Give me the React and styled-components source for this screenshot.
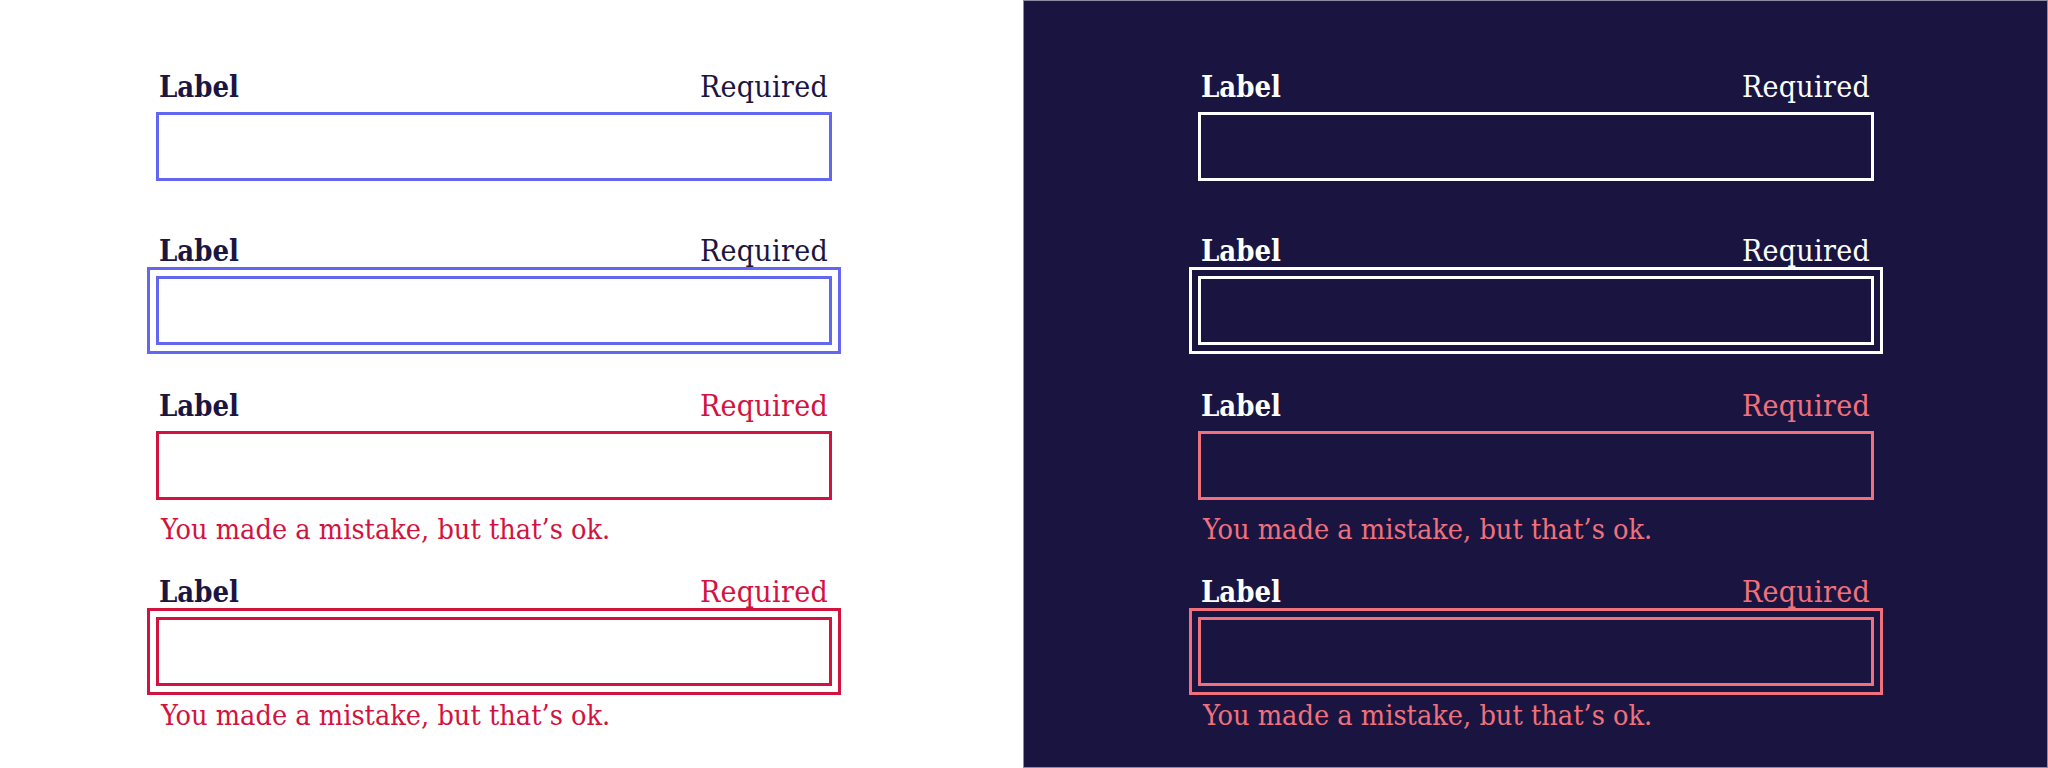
import React from "react";
import styled, { createGlobalStyle, css } from "styled-components";

const Global = createGlobalStyle`
  html, body { margin: 0; padding: 0; }
  body {
    width: 2048px;
    height: 768px;
    overflow: hidden;
    background: #ffffff;
    font-family: "DejaVu Serif Condensed", "DejaVu Serif", serif;
    font-stretch: condensed;
  }
`;

const themes = {
  light: { bg: "#ffffff", text: "#1b1541", line: "#6366f1", error: "#d3133f" },
  dark: { bg: "#1a1540", text: "#ffffff", line: "#ffffff", error: "#f0717c" },
};

const Page = styled.main`
  display: grid;
  grid-template-columns: 1023px 1025px;
  height: 768px;
`;

const Panel = styled.section`
  box-sizing: border-box;
  height: 768px;
  display: flex;
  flex-direction: column;
  background: ${(p) => themes[p.$mode].bg};
  ${(p) =>
    p.$mode === "dark"
      ? css`
          border: 1px solid #8e8aa3;
          padding: 71px 0 0 174px;
        `
      : css`
          padding: 72px 0 0 156px;
        `}
`;

const Field = styled.div`
  display: flex;
  flex-direction: column;
  width: 676px;
  margin-top: ${(p) => p.$top}px;
`;

const Header = styled.div`
  display: flex;
  justify-content: space-between;
  align-items: baseline;
  height: 30px;
  line-height: 30px;
  padding: 0 4px 0 3px;
  margin-bottom: 10px;
`;

const Label = styled.label`
  font-size: 29px;
  font-weight: 700;
  color: ${(p) => themes[p.$mode].text};
`;

const Required = styled.span`
  font-size: 30px;
  font-weight: 400;
  letter-spacing: 0.3px;
  color: ${(p) => (p.$error ? themes[p.$mode].error : themes[p.$mode].text)};
`;

const Box = styled.div`
  box-sizing: border-box;
  width: 676px;
  height: 69px;
  border: 3px solid
    ${(p) => (p.$error ? themes[p.$mode].error : themes[p.$mode].line)};
  background: transparent;
  ${(p) =>
    p.$focus &&
    css`
      outline: 3px solid
        ${p.$error ? themes[p.$mode].error : themes[p.$mode].line};
      outline-offset: 6px;
    `}
`;

const ErrorText = styled.p`
  margin: 14px 0 0;
  padding-left: 5px;
  height: 30px;
  line-height: 30px;
  font-size: 28.6px;
  color: ${(p) => themes[p.$mode].error};
`;

const fields = [
  { top: 0, focus: false, error: false },
  { top: 55, focus: true, error: false },
  { top: 46, focus: false, error: true },
  { top: 33, focus: true, error: true },
];

function FormField({ mode, top, focus, error }) {
  return (
    <Field $top={top}>
      <Header>
        <Label $mode={mode}>Label</Label>
        <Required $mode={mode} $error={error}>
          Required
        </Required>
      </Header>
      <Box $mode={mode} $focus={focus} $error={error} />
      {error && <ErrorText $mode={mode}>You made a mistake, but that’s ok.</ErrorText>}
    </Field>
  );
}

export default function App() {
  return (
    <>
      <Global />
      <Page>
        {["light", "dark"].map((mode) => (
          <Panel key={mode} $mode={mode}>
            {fields.map((f, i) => (
              <FormField key={i} mode={mode} {...f} />
            ))}
          </Panel>
        ))}
      </Page>
    </>
  );
}
